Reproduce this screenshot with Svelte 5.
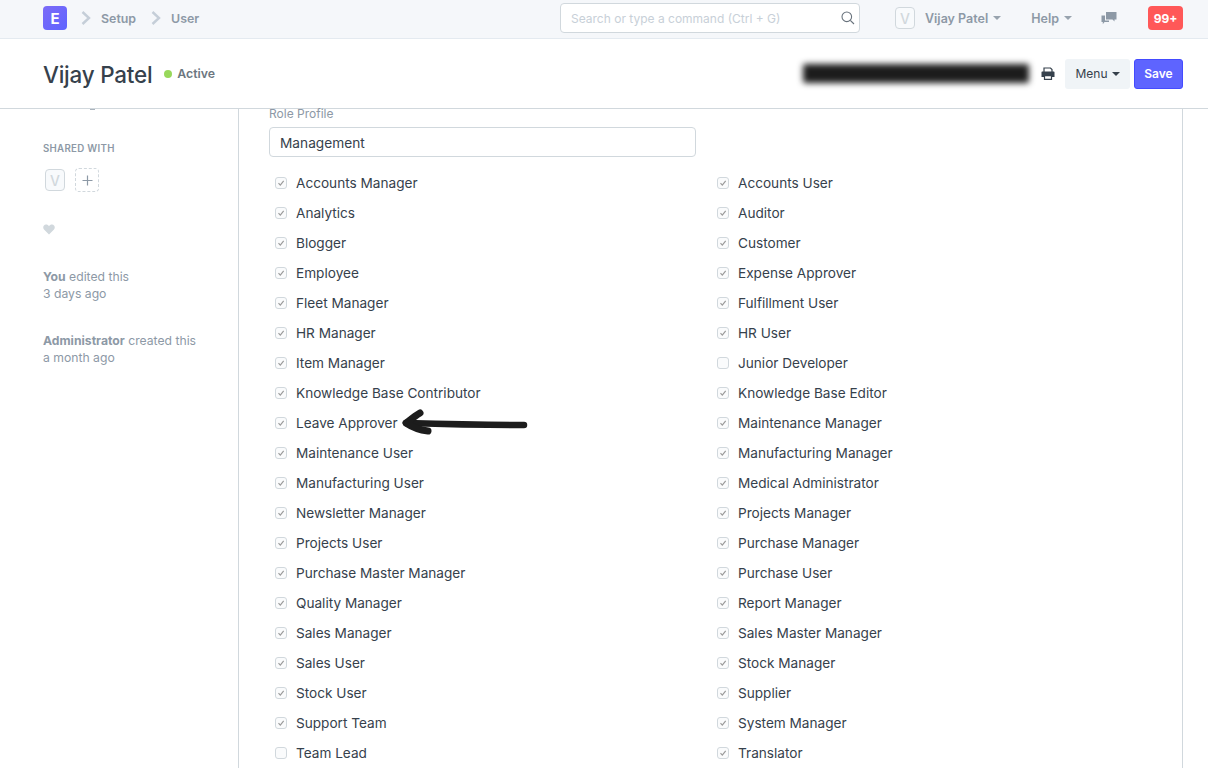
<script>
  const roles = [
    ["Accounts Manager", true], ["Accounts User", true],
    ["Analytics", true], ["Auditor", true],
    ["Blogger", true], ["Customer", true],
    ["Employee", true], ["Expense Approver", true],
    ["Fleet Manager", true], ["Fulfillment User", true],
    ["HR Manager", true], ["HR User", true],
    ["Item Manager", true], ["Junior Developer", false],
    ["Knowledge Base Contributor", true], ["Knowledge Base Editor", true],
    ["Leave Approver", true], ["Maintenance Manager", true],
    ["Maintenance User", true], ["Manufacturing Manager", true],
    ["Manufacturing User", true], ["Medical Administrator", true],
    ["Newsletter Manager", true], ["Projects Manager", true],
    ["Projects User", true], ["Purchase Manager", true],
    ["Purchase Master Manager", true], ["Purchase User", true],
    ["Quality Manager", true], ["Report Manager", true],
    ["Sales Manager", true], ["Sales Master Manager", true],
    ["Sales User", true], ["Stock Manager", true],
    ["Stock User", true], ["Supplier", true],
    ["Support Team", true], ["System Manager", true],
    ["Team Lead", false], ["Translator", true]
  ];
</script>

<div class="page">
  <header class="navbar">
    <div class="logo">E</div>
    <svg class="crumb-arrow first" viewBox="0 0 10 14"><path d="M1.5 1 L8 7 L1.5 13" /></svg>
    <span class="crumb">Setup</span>
    <svg class="crumb-arrow" viewBox="0 0 10 14"><path d="M1.5 1 L8 7 L1.5 13" /></svg>
    <span class="crumb">User</span>

    <div class="search">
      <span class="placeholder">Search or type a command (Ctrl + G)</span>
      <svg class="search-icon" viewBox="0 0 14 14">
        <circle cx="5.8" cy="5.8" r="4.8" />
        <path d="M9.3 9.3 L13 13" />
      </svg>
    </div>

    <div class="avatar">V</div>
    <span class="nav-item user">Vijay Patel<i class="caret"></i></span>
    <span class="nav-item help">Help<i class="caret"></i></span>
    <svg class="chat" viewBox="0 0 16 13">
      <path d="M5 0 H15.5 V7.5 H13.5 V9.5 L11.5 7.5 H5 Z" />
      <path d="M0.5 3.5 H4 V8.5 H8 V10 H3.5 L1.8 12.2 V10 H0.5 Z" />
    </svg>
    <div class="badge">99+</div>
  </header>

  <section class="page-head">
    <h1>Vijay Patel</h1>
    <span class="dot"></span>
    <span class="status">Active</span>
    <div class="redacted"></div>
    <svg class="print" viewBox="0 0 14 13">
      <path d="M3 5 V1 H9.5 L11 2.5 V5" class="outline" />
      <path d="M0.5 5.2 Q0.5 4.5 1.2 4.5 H12.8 Q13.5 4.5 13.5 5.2 V10 H11 V8 H3 V10 H0.5 Z" />
      <path d="M3.5 8.6 H10.5 V12.4 H3.5 Z" class="outline" />
    </svg>
    <button class="btn-menu">Menu<i class="caret dark"></i></button>
    <button class="btn-save">Save</button>
  </section>

  <main class="layout">
    <aside class="sidebar">
      <div class="cut"></div>
      <div class="shared-label">SHARED WITH</div>
      <div class="shared-row">
        <div class="avatar small">V</div>
        <div class="add">
          <svg viewBox="0 0 11 11"><path d="M5.5 0.5 V10.5 M0.5 5.5 H10.5" /></svg>
        </div>
      </div>
      <svg class="heart" viewBox="0 0 12 11">
        <path d="M6 10.6 L1 5.6 C-0.6 3.8 0.4 0.6 3 0.6 C4.4 0.6 5.4 1.3 6 2.3 C6.6 1.3 7.6 0.6 9 0.6 C11.6 0.6 12.6 3.8 11 5.6 Z" />
      </svg>
      <p class="activity first"><b>You</b> edited this<br />3 days ago</p>
      <p class="activity"><b>Administrator</b> created this<br />a month ago</p>
    </aside>

    <div class="form">
      <div class="field-label">Role Profile</div>
      <div class="input">Management</div>
      <div class="roles">
        {#each roles as [name, checked]}
          <div class="role">
            <span class="box">
              {#if checked}
                <svg viewBox="0 0 12 12"><path d="M3 6.2 L5.2 8.6 L9.2 3.4" /></svg>
              {/if}
            </span>
            <span class="role-name">{name}</span>
            {#if name === "Leave Approver"}
              <svg class="arrow" viewBox="0 0 140 32">
                <path class="shaft" d="M11 16 C45 17 90 18 129 18" />
                <path class="head" d="M25 6 C20 9 15 13 11 16 C17 20 25 23 33 24" />
              </svg>
            {/if}
          </div>
        {/each}
      </div>
    </div>
  </main>
</div>

<style>
  :global(body) {
    margin: 0;
    background: #fff;
  }

  .page {
    height: 768px;
    overflow: hidden;
    font-family: Inter, "Noto Sans", sans-serif;
    color: #36414c;
  }

  /* top bar */
  .navbar {
    height: 36px;
    padding-bottom: 2px;
    border-bottom: 1px solid #e4eaf0;
    background: #f5f7fa;
    display: flex;
    align-items: center;
    padding-left: 43px;
  }

  .logo {
    width: 24px;
    height: 24px;
    border-radius: 4px;
    background: linear-gradient(135deg, #7c6bf7, #5e64ff);
    color: #fff;
    font-weight: 700;
    font-size: 15px;
    display: flex;
    align-items: center;
    justify-content: center;
  }

  .crumb-arrow {
    width: 10px;
    height: 14px;
    margin: 0 10px 0 15px;
    fill: none;
    stroke: #c5ced8;
    stroke-width: 2.4;
  }

  .crumb-arrow.first {
    margin-left: 14px;
  }

  .crumb {
    font-size: 12.4px;
    font-weight: 600;
    color: #8d99a6;
  }

  .search {
    margin-left: auto;
    width: 300px;
    height: 30px;
    border: 1px solid #d1d8dd;
    border-radius: 4px;
    background: #fff;
    display: flex;
    align-items: center;
    justify-content: space-between;
    padding: 0 4px 0 10px;
    box-sizing: border-box;
  }

  .placeholder {
    font-size: 12px;
    color: #c8d0d8;
  }

  .search-icon {
    width: 14px;
    height: 14px;
    fill: none;
    stroke: #68727c;
    stroke-width: 1.1;
  }

  .avatar {
    width: 20px;
    height: 22px;
    margin-left: 35px;
    border: 1px solid #d1d8dd;
    border-radius: 4px;
    box-sizing: border-box;
    background: #f8fafc;
    color: #d1d8dd;
    font-size: 14px;
    font-weight: 500;
    display: flex;
    align-items: center;
    justify-content: center;
  }

  .avatar.small {
    margin-left: 2px;
  }

  .nav-item {
    font-size: 12.5px;
    font-weight: 600;
    color: #8d99a6;
    display: flex;
    align-items: center;
  }

  .nav-item.user {
    margin-left: 10px;
  }

  .nav-item.help {
    margin-left: 30px;
  }

  .caret {
    width: 0;
    height: 0;
    margin-left: 5px;
    border-left: 4px solid transparent;
    border-right: 4px solid transparent;
    border-top: 4px solid #98a3ae;
  }

  .caret.dark {
    border-top-color: #36414c;
    margin-left: 4px;
  }

  .chat {
    width: 16px;
    height: 13px;
    margin-left: 29px;
    fill: #8d99a6;
  }

  .badge {
    width: 35px;
    height: 24px;
    margin-left: 31px;
    margin-right: 25px;
    border-radius: 4px;
    background: #ff5858;
    color: #fff;
    font-size: 12px;
    font-weight: 700;
    display: flex;
    align-items: center;
    justify-content: center;
  }

  /* title row */
  .page-head {
    height: 69px;
    border-bottom: 1px solid #d1d8dd;
    display: flex;
    align-items: center;
    padding: 0 25px 0 43px;
  }

  h1 {
    margin: 2px 0 0;
    font-size: 22.4px;
    font-weight: 500;
    letter-spacing: -0.2px;
    color: #36414c;
  }

  .dot {
    width: 8px;
    height: 8px;
    margin-left: 12px;
    border-radius: 50%;
    background: #98d85b;
  }

  .status {
    margin-left: 5px;
    font-size: 12.3px;
    font-weight: 600;
    color: #6c7680;
  }

  .redacted {
    margin-left: auto;
    width: 226px;
    height: 19px;
    border-radius: 2px;
    background: #1c1c1c;
    filter: blur(3px);
  }

  .print {
    width: 14px;
    height: 13px;
    margin-left: 12px;
    fill: #36414c;
  }

  .print .outline {
    fill: #fff;
    stroke: #36414c;
    stroke-width: 1.2;
  }

  button {
    height: 30px;
    border: 1px solid transparent;
    border-radius: 3px;
    font-family: inherit;
    font-size: 12px;
    display: flex;
    align-items: center;
    justify-content: center;
    padding: 0;
  }

  .btn-menu {
    width: 65px;
    margin-left: 10px;
    background: #f0f4f7;
    color: #36414c;
  }

  .btn-save {
    width: 49px;
    margin-left: 4px;
    background: #5e64ff;
    border-color: #444bff;
    color: #fff;
    font-weight: 600;
  }

  /* body */
  .layout {
    display: flex;
    margin-right: 25px;
  }

  .sidebar {
    width: 195px;
    padding-left: 43px;
    flex: none;
    border-right: 1px solid #d1d8dd;
    height: 660px;
    overflow: hidden;
    color: #8d99a6;
  }

  /* tail of the line scrolled away above */
  .cut {
    width: 5px;
    height: 1px;
    margin-left: 47px;
    background: #aab3bc;
  }

  .shared-label {
    margin-top: 33px;
    font-size: 9.7px;
    line-height: 12px;
    font-weight: 600;
    letter-spacing: 0.3px;
    color: #8d99a6;
  }

  .shared-row {
    display: flex;
    align-items: center;
    margin-top: 13px;
    gap: 10px;
  }

  .add {
    width: 24px;
    height: 24px;
    border: 1px dashed #d1d8dd;
    border-radius: 4px;
    box-sizing: border-box;
    display: flex;
    align-items: center;
    justify-content: center;
  }

  .add svg {
    width: 11px;
    height: 11px;
    fill: none;
    stroke: #8d99a6;
    stroke-width: 1.2;
  }

  .heart {
    display: block;
    width: 12px;
    height: 11px;
    margin-top: 32px;
    fill: #d1d8dd;
  }

  .activity {
    margin: 30px 0 0;
    font-size: 12.2px;
    line-height: 17px;
    color: #8d99a6;
  }

  .activity.first {
    margin-top: 33px;
  }

  .activity b {
    font-weight: 700;
  }

  .form {
    flex: 1;
    border-right: 1px solid #d1d8dd;
    padding-left: 30px;
  }

  .field-label {
    font-size: 12px;
    line-height: 14px;
    margin-top: -2px;
    color: #8d99a6;
  }

  .input {
    width: 427px;
    height: 30px;
    margin-top: 6px;
    border: 1px solid #d1d8dd;
    border-radius: 4px;
    box-sizing: border-box;
    padding-left: 10px;
    font-size: 13.7px;
    line-height: 30px;
    color: #36414c;
  }

  .roles {
    display: grid;
    grid-template-columns: 442px 1fr;
    grid-auto-rows: 30px;
    margin-top: 10px;
    padding-left: 6px;
  }

  .role {
    position: relative;
    display: flex;
    align-items: center;
    font-size: 13.62px;
    color: #36414c;
    padding-top: 1px;
    box-sizing: border-box;
  }

  .box {
    width: 12px;
    height: 12px;
    margin-right: 9px;
    margin-top: 1px;
    border: 1px solid #d1d8dd;
    border-radius: 3px;
    box-sizing: border-box;
    background: #fafbfc;
    display: flex;
    flex: none;
  }

  .box svg {
    width: 10px;
    height: 10px;
    fill: none;
    stroke: #9a9a9a;
    stroke-width: 1.4;
  }

  .role-name {
    white-space: nowrap;
  }

  .arrow {
    position: absolute;
    left: 120px;
    top: 0;
    width: 140px;
    height: 32px;
    fill: none;
    stroke: #1c1c1c;
    stroke-linecap: round;
    stroke-linejoin: round;
    filter: blur(0.4px);
  }

  .arrow .shaft {
    stroke-width: 6.5;
  }

  .arrow .head {
    stroke-width: 7;
  }
</style>
